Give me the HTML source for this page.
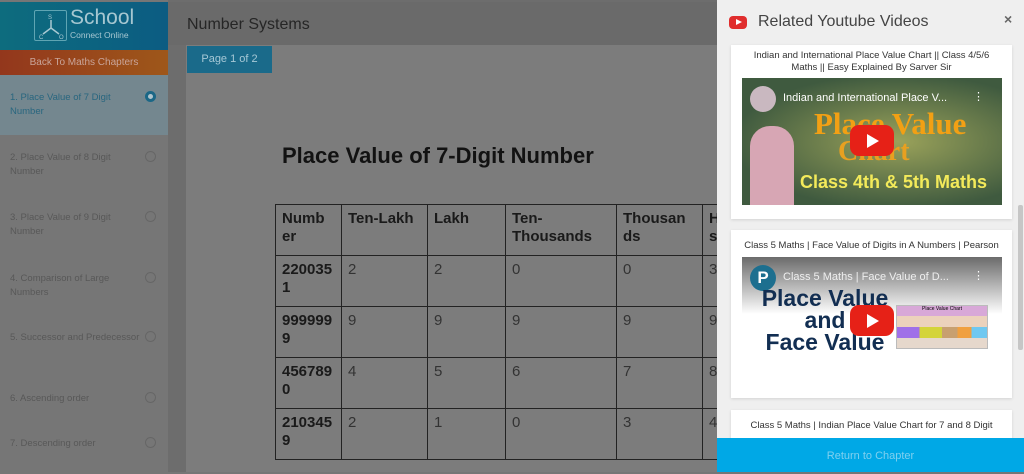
<!DOCTYPE html>
<html><head><style>
*{box-sizing:border-box;margin:0;padding:0}
body{width:1024px;height:472px;overflow:hidden;font-family:"Liberation Sans",sans-serif;background:#767676;position:relative}
.abs{position:absolute}
.side{left:0;top:0;width:168px;height:472px;background:#767676}
.logo{left:0;top:2px;width:168px;height:48px;background:linear-gradient(90deg,#0d6c7e,#0c5c82)}
.back{left:0;top:50px;width:168px;height:25px;background:linear-gradient(90deg,#93371c,#9e571a);color:#c9a59a;font-size:10px;text-align:center;line-height:25px}
.act{left:0;top:75px;width:168px;height:60px;background:#74878f}
.item{left:10px;font-size:9.5px;line-height:14px;color:#585858;width:132px}
.rad{left:145px;width:11px;height:11px;border:1px solid #666;border-radius:50%}
.main{left:168px;top:0;width:549px;height:472px;background:#6d6d6d}
.hdr{left:168px;top:2px;width:549px;height:43px;background:#6a6a6a;color:#262626;font-size:16px;padding:14px 0 0 19px}
.card{left:186px;top:45px;width:531px;height:427px;background:#7c7c7c}
table{position:absolute;left:275px;top:204px;border-collapse:collapse;font-size:15px;color:#1a1a1a}
td{border:1.5px solid #222;vertical-align:top;padding:5px 6px;height:51px;line-height:18px}
td:first-child{font-weight:bold}
tr:first-child td{font-weight:bold}
td:not(:first-child){color:#333}
tr:first-child td{color:#1a1a1a}
.panel{left:717px;top:0;width:307px;height:472px;background:#efefef}
.vc{left:731px;width:281px;background:#fff;box-shadow:0 1px 3px rgba(0,0,0,.12)}
.vt{font-size:9.5px;color:#333;text-align:center;line-height:12px}
.play{width:44px;height:31px;background:#e62117;border-radius:9px;position:absolute}
.play:after{content:"";position:absolute;left:17px;top:9px;border-left:12px solid #fff;border-top:7px solid transparent;border-bottom:7px solid transparent}
</style></head><body>
<div class="abs" style="left:0;top:0;width:1024px;height:2px;background:#4a70b6"></div>
<div class="abs side"></div>
<div class="abs logo">
 <div class="abs" style="left:34px;top:8px;width:33px;height:31px;border:1px solid #5fa5b3;border-radius:2px"></div>
 <svg class="abs" style="left:36px;top:10px" width="30" height="28"><g stroke="#a9c9d2" stroke-width="1.5" fill="none"><path d="M15 8V16L7 22M15 16L23 22"/></g><text x="12" y="7" font-size="6" fill="#a9c9d2">S</text><text x="3" y="27" font-size="6" fill="#a9c9d2">C</text><text x="23" y="27" font-size="6" fill="#a9c9d2">O</text></svg>
 <div class="abs" style="left:70px;top:4px;color:#a6c7d1;font-size:21px">School</div>
 <div class="abs" style="left:70px;top:28px;color:#a6c7d1;font-size:8.5px">Connect Online</div>
</div>
<div class="abs back">Back To Maths Chapters</div>
<div class="abs act"></div>
<div class="abs item" style="top:91px;color:#28667f">1. Place Value of 7 Digit Number</div>
<div class="abs rad" style="top:91px;border:3px solid #1b6786;background:#b0c4cc"></div>
<div class="abs item" style="top:151px">2. Place Value of 8 Digit Number</div><div class="abs rad" style="top:151px"></div>
<div class="abs item" style="top:211px">3. Place Value of 9 Digit Number</div><div class="abs rad" style="top:211px"></div>
<div class="abs item" style="top:272px">4. Comparison of Large Numbers</div><div class="abs rad" style="top:272px"></div>
<div class="abs item" style="top:331px;width:142px">5. Successor and Predecessor</div><div class="abs rad" style="top:331px"></div>
<div class="abs item" style="top:392px">6. Ascending order</div><div class="abs rad" style="top:392px"></div>
<div class="abs item" style="top:437px">7. Descending order</div><div class="abs rad" style="top:437px"></div>
<div class="abs main"></div>
<div class="abs hdr">Number Systems</div>
<div class="abs card"></div>
<div class="abs" style="left:187px;top:46px;width:85px;height:27px;background:#1a6a8a;color:#a6c8d6;font-size:11px;text-align:center;line-height:27px">Page 1 of 2</div>
<div class="abs" style="left:282px;top:143px;font-size:22px;font-weight:bold;color:#121212">Place Value of 7-Digit Number</div>
<table>
<tr><td style="width:66px">Numb<br>er</td><td style="width:86px">Ten-Lakh</td><td style="width:78px">Lakh</td><td style="width:111px">Ten-<br>Thousands</td><td style="width:86px">Thousan<br>ds</td><td style="width:30px">H<br>s</td></tr>
<tr><td>220035<br>1</td><td>2</td><td>2</td><td>0</td><td>0</td><td>3</td></tr>
<tr><td>999999<br>9</td><td>9</td><td>9</td><td>9</td><td>9</td><td>9</td></tr>
<tr><td>456789<br>0</td><td>4</td><td>5</td><td>6</td><td>7</td><td>8</td></tr>
<tr><td>210345<br>9</td><td>2</td><td>1</td><td>0</td><td>3</td><td>4</td></tr>
</table>
<div class="abs panel"></div>
<div class="abs" style="left:729px;top:16px;width:18px;height:13px;background:#e02d2d;border-radius:4px"></div>
<div class="abs" style="left:736px;top:19px;border-left:6px solid #fff;border-top:3.5px solid transparent;border-bottom:3.5px solid transparent"></div>
<div class="abs" style="left:758px;top:13px;font-size:16px;color:#444">Related Youtube Videos</div>
<div class="abs" style="left:1004px;top:11px;font-size:14px;color:#666;font-weight:bold">×</div>
<div class="abs vc" style="top:45px;height:174px">
 <div class="vt" style="margin-top:5px">Indian and International Place Value Chart || Class 4/5/6<br>Maths || Easy Explained By Sarver Sir</div>
 <div class="abs" style="left:11px;top:33px;width:260px;height:127px;background:radial-gradient(ellipse at 60% 50%,#9aa25a,#3f5a3f 75%);overflow:hidden">
  <div class="abs" style="left:8px;top:8px;width:26px;height:26px;border-radius:50%;background:#c9b8c0"></div>
  <div class="abs" style="left:41px;top:14px;color:#fff;font-size:11px">Indian and International Place V...</div>
  <div class="abs" style="left:231px;top:12px;color:#fff;font-size:11px">⋮</div>
  <div class="abs" style="left:72px;top:28px;color:#f2a014;font-size:31px;font-weight:bold;font-family:'Liberation Serif',serif">Place Value</div>
  <div class="abs" style="left:96px;top:58px;color:#e8a020;font-size:28px;font-weight:bold;font-family:'Liberation Serif',serif">Chart</div>
  <div class="abs" style="left:58px;top:94px;color:#f3ea5a;font-size:18px;font-weight:bold">Class 4th &amp; 5th Maths</div>
  <div class="abs" style="left:8px;top:48px;width:44px;height:79px;background:#d7a6b4;border-radius:20px 20px 0 0"></div>
  <div class="play" style="left:108px;top:47px"></div>
 </div>
</div>
<div class="abs vc" style="top:230px;height:168px">
 <div class="vt" style="margin-top:10px">Class 5 Maths | Face Value of Digits in A Numbers | Pearson</div>
 <div class="abs" style="left:11px;top:27px;width:260px;height:95px;background:linear-gradient(#6b6b6b,#fff 60%)">
  <div class="abs" style="left:8px;top:8px;width:26px;height:26px;border-radius:50%;background:#1d6f8f;color:#fff;font-size:17px;font-weight:bold;text-align:center;line-height:26px">P</div>
  <div class="abs" style="left:41px;top:14px;color:#eee;font-size:11px">Class 5 Maths | Face Value of D...</div>
  <div class="abs" style="left:231px;top:12px;color:#fff;font-size:11px">⋮</div>
  <div class="abs" style="left:8px;top:30px;color:#122e52;font-size:23px;font-weight:bold;text-align:center;line-height:22px;width:150px">Place Value<br>and<br>Face Value</div>
  <div class="abs" style="left:154px;top:48px;width:92px;height:44px;background:#e6d8cc;border:1px solid #bbb">
   <div style="height:10px;background:#d8a8d8;font-size:5px;text-align:center">Place Value Chart</div>
   <div style="height:11px;background:#ecd2bc"></div>
   <div style="height:11px;background:linear-gradient(90deg,#a070e8 25%,#d4d43a 25% 50%,#c8a070 50% 67%,#f0a040 67% 83%,#70c8f0 83%)"></div>
  </div>
  <div class="play" style="left:108px;top:48px"></div>
 </div>
</div>
<div class="abs vc" style="top:410px;height:40px"><div class="vt" style="margin-top:10px">Class 5 Maths | Indian Place Value Chart for 7 and 8 Digit</div></div>
<div class="abs" style="left:1018px;top:205px;width:5px;height:145px;background:#c6c6c6;border-radius:2px"></div>
<div class="abs" style="left:717px;top:438px;width:307px;height:34px;background:#00a8e6;color:#7fd0ef;font-size:11px;text-align:center;line-height:36px">Return to Chapter</div>
</body></html>
